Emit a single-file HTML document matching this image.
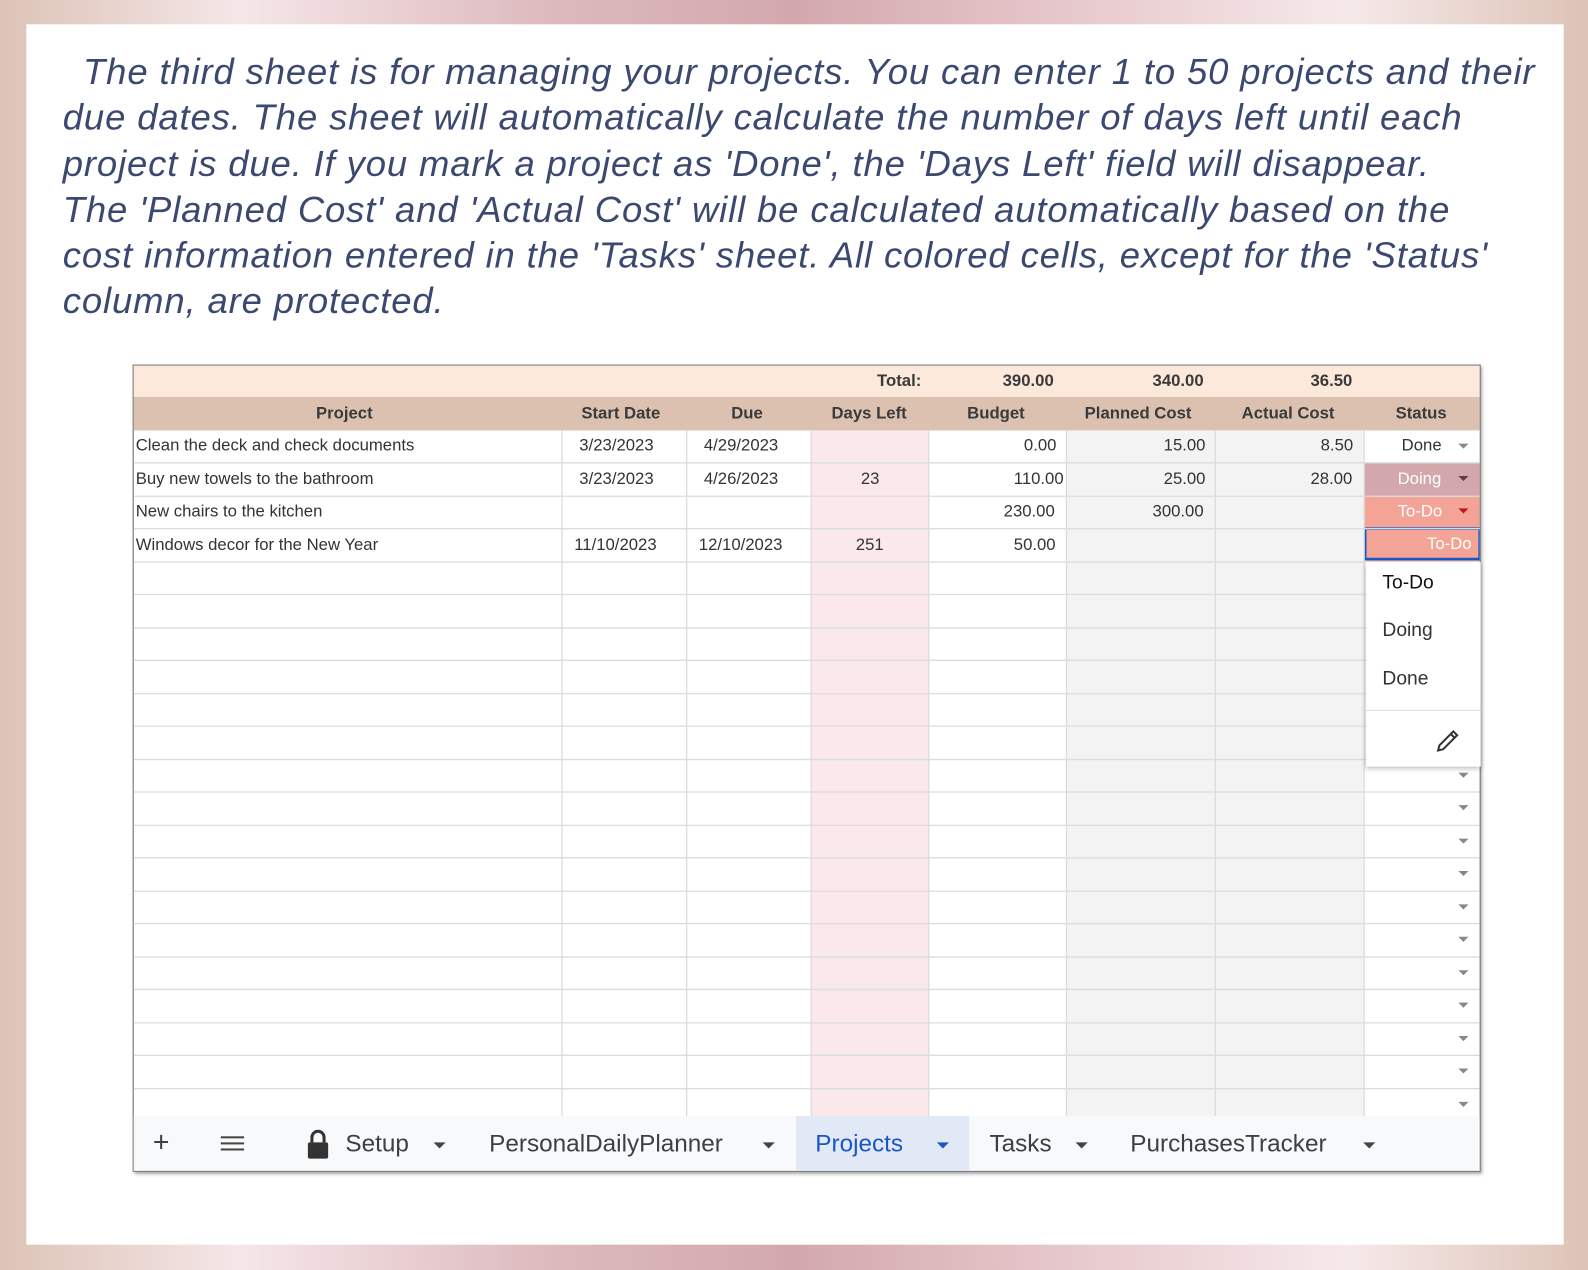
<!DOCTYPE html>
<html><head><meta charset="utf-8"><style>
html,body{margin:0;padding:0;width:1588px;height:1270px;overflow:hidden;background:#fff}
#w{position:absolute;left:0;top:0;width:1568px;height:1254px;transform:scale(1.01276);transform-origin:0 0;
background:linear-gradient(90deg,#dcc3b6 0%,#f5e6e8 15%,#dcb9bd 35%,#d2a8ad 50%,#e4c4c8 65%,#f6e9ea 85%,#dcc3b6 100%)}
#p{position:absolute;left:26px;top:24px;width:1518px;height:1205px;background:#fff}
.t{position:absolute;left:62px;font-family:"Liberation Sans",sans-serif;font-style:italic;font-size:36px;letter-spacing:0.85px;color:#3b4870;white-space:nowrap;line-height:45px}
.c{position:absolute;font-family:"Liberation Sans",sans-serif;font-size:16.5px;color:#333;white-space:nowrap}
.b{font-weight:bold;color:#3a3a3a}
.tab{position:absolute;top:1116px;font-family:"Liberation Sans",sans-serif;font-size:24px;color:#3c4043;white-space:nowrap}
.ar{position:absolute;width:0;height:0;border-left:6px solid transparent;border-right:6px solid transparent;border-top:6px solid #444}
.sa{position:absolute;left:1440px;width:0;height:0;border-left:5px solid transparent;border-right:5px solid transparent;border-top:5px solid #888}
</style></head><body><div id="w">
<div id="p"></div>
<div class="t" style="top:48px;left:82px">The third sheet is for managing your projects. You can enter 1 to 50 projects and their</div>
<div class="t" style="top:93px">due dates. The sheet will automatically calculate the number of days left until each</div>
<div class="t" style="top:139px">project is due. If you mark a project as 'Done', the 'Days Left' field will disappear.</div>
<div class="t" style="top:184px">The 'Planned Cost' and 'Actual Cost' will be calculated automatically based on the</div>
<div class="t" style="top:229px">cost information entered in the 'Tasks' sheet. All colored cells, except for the 'Status'</div>
<div class="t" style="top:274px">column, are protected.</div>

<div style="position:absolute;left:131px;top:360px;width:1331px;height:797px;border:1px solid #666;box-shadow:2px 2px 3px rgba(0,0,0,.35);background:#fff;overflow:hidden;box-sizing:border-box">
<svg width="1331" height="797" style="position:absolute;left:-1px;top:-1px">
<rect x="0" y="0" width="1331" height="32" fill="#fde8dc"/>
<rect x="0" y="32" width="1331" height="33" fill="#dcc1b1"/>
<rect x="670" y="65" width="116" height="680" fill="#fae8ea"/>
<rect x="922" y="65" width="294" height="680" fill="#f3f3f3"/>
<rect x="1216" y="65" width="115" height="32" fill="#fff"/>
<rect x="1216" y="97" width="115" height="33" fill="#d3a8ad"/>
<rect x="1216" y="130" width="115" height="32" fill="#f4a496"/>
<rect x="1216" y="162" width="115" height="32" fill="#f4a496"/>
<rect x="1217" y="162" width="113" height="30" fill="none" stroke="#1a56c4" stroke-width="2.5"/>
<g stroke="#dcdcdc" stroke-width="1.3">
<line x1="0" y1="97" x2="1331" y2="97"/><line x1="0" y1="130" x2="1331" y2="130"/><line x1="0" y1="162" x2="1331" y2="162"/><line x1="0" y1="195" x2="1331" y2="195"/><line x1="0" y1="227" x2="1331" y2="227"/><line x1="0" y1="260" x2="1331" y2="260"/><line x1="0" y1="292" x2="1331" y2="292"/><line x1="0" y1="325" x2="1331" y2="325"/><line x1="0" y1="357" x2="1331" y2="357"/><line x1="0" y1="390" x2="1331" y2="390"/><line x1="0" y1="422" x2="1331" y2="422"/><line x1="0" y1="455" x2="1331" y2="455"/><line x1="0" y1="487" x2="1331" y2="487"/><line x1="0" y1="520" x2="1331" y2="520"/><line x1="0" y1="552" x2="1331" y2="552"/><line x1="0" y1="585" x2="1331" y2="585"/><line x1="0" y1="617" x2="1331" y2="617"/><line x1="0" y1="650" x2="1331" y2="650"/><line x1="0" y1="682" x2="1331" y2="682"/><line x1="0" y1="715" x2="1331" y2="715"/>
<line x1="424" y1="65" x2="424" y2="745"/><line x1="547" y1="65" x2="547" y2="745"/><line x1="670" y1="65" x2="670" y2="745"/><line x1="786" y1="65" x2="786" y2="745"/><line x1="922" y1="65" x2="922" y2="745"/><line x1="1069" y1="65" x2="1069" y2="745"/><line x1="1216" y1="65" x2="1216" y2="745"/>
</g>
<rect x="0" y="742" width="1331" height="55" fill="#f8f9fa"/>
<rect x="655" y="742" width="171" height="55" fill="#e1e9f7"/>
</svg>
</div>

<div class="c b" style="left:866px;top:367px">Total:</div>
<div class="c b" style="left:990px;top:367px">390.00</div>
<div class="c b" style="left:1138px;top:367px">340.00</div>
<div class="c b" style="left:1294px;top:367px">36.50</div>
<div class="c b" style="left:312px;top:399px">Project</div>
<div class="c b" style="left:574px;top:399px">Start Date</div>
<div class="c b" style="left:722px;top:399px">Due</div>
<div class="c b" style="left:821px;top:399px">Days Left</div>
<div class="c b" style="left:955px;top:399px">Budget</div>
<div class="c b" style="left:1071px;top:399px">Planned Cost</div>
<div class="c b" style="left:1226px;top:399px">Actual Cost</div>
<div class="c b" style="left:1378px;top:399px">Status</div>

<div class="c" style="left:134px;top:431px">Clean the deck and check documents</div>
<div class="c" style="left:572px;top:431px">3/23/2023</div>
<div class="c" style="left:695px;top:431px">4/29/2023</div>
<div class="c" style="left:1011px;top:431px">0.00</div>
<div class="c" style="left:1149px;top:431px">15.00</div>
<div class="c" style="left:1304px;top:431px">8.50</div>
<div class="c" style="left:1384px;top:431px">Done</div>
<div class="sa" style="top:438px"></div>

<div class="c" style="left:134px;top:464px">Buy new towels to the bathroom</div>
<div class="c" style="left:572px;top:464px">3/23/2023</div>
<div class="c" style="left:695px;top:464px">4/26/2023</div>
<div class="c" style="left:850px;top:464px">23</div>
<div class="c" style="left:1001px;top:464px">110.00</div>
<div class="c" style="left:1149px;top:464px">25.00</div>
<div class="c" style="left:1294px;top:464px">28.00</div>
<div class="c" style="left:1380px;top:464px;color:#fff">Doing</div>
<div class="sa" style="top:470px;border-top-color:#6b3a45"></div>

<div class="c" style="left:134px;top:496px">New chairs to the kitchen</div>
<div class="c" style="left:991px;top:496px">230.00</div>
<div class="c" style="left:1138px;top:496px">300.00</div>
<div class="c" style="left:1380px;top:496px;color:#fff">To-Do</div>
<div class="sa" style="top:502px;border-top-color:#c0181c"></div>

<div class="c" style="left:134px;top:529px">Windows decor for the New Year</div>
<div class="c" style="left:567px;top:529px">11/10/2023</div>
<div class="c" style="left:690px;top:529px">12/10/2023</div>
<div class="c" style="left:845px;top:529px">251</div>
<div class="c" style="left:1001px;top:529px">50.00</div>
<div class="c" style="left:1409px;top:528px;color:#fff">To-Do</div>

<div class="sa" style="top:763px"></div><div class="sa" style="top:795px"></div><div class="sa" style="top:828px"></div><div class="sa" style="top:860px"></div><div class="sa" style="top:893px"></div><div class="sa" style="top:925px"></div><div class="sa" style="top:958px"></div><div class="sa" style="top:990px"></div><div class="sa" style="top:1023px"></div><div class="sa" style="top:1055px"></div><div class="sa" style="top:1088px"></div>

<div style="position:absolute;left:1349px;top:555px;width:113px;height:202px;background:#fff;box-shadow:0 2px 5px rgba(0,0,0,.3)">
<div style="position:absolute;left:0;right:0;top:146px;border-top:1px solid #ddd"></div>
<div class="c" style="left:16px;top:10px;font-size:19px;color:#111">To-Do</div>
<div class="c" style="left:16px;top:57px;font-size:19px">Doing</div>
<div class="c" style="left:16px;top:105px;font-size:19px">Done</div>
<svg width="30" height="30" style="position:absolute;left:66px;top:161px" viewBox="0 0 24 24"><path d="M4 20l1-4L16 5l3 3L8 19z M14 7l3 3" fill="none" stroke="#333" stroke-width="1.6"/></svg>
</div>

<div class="tab" style="left:151px;top:1112px;font-size:28px">+</div>
<div style="position:absolute;left:218px;top:1122px;width:23px;height:2px;background:#444;box-shadow:0 6px 0 #444,0 12px 0 #444"></div>
<svg width="22" height="30" style="position:absolute;left:303px;top:1115px" viewBox="0 0 22 30"><path d="M5 13V8a6 6 0 0 1 12 0v5" fill="none" stroke="#333" stroke-width="3"/><rect x="1" y="13" width="20" height="16" rx="2" fill="#333"/></svg>
<div class="tab" style="left:341px">Setup</div><div class="ar" style="left:428px;top:1128px"></div>
<div class="tab" style="left:483px">PersonalDailyPlanner</div><div class="ar" style="left:753px;top:1128px"></div>
<div class="tab" style="left:805px;color:#1a56c4">Projects</div><div class="ar" style="left:925px;top:1128px;border-top-color:#1a56c4"></div>
<div class="tab" style="left:977px">Tasks</div><div class="ar" style="left:1062px;top:1128px"></div>
<div class="tab" style="left:1116px">PurchasesTracker</div><div class="ar" style="left:1346px;top:1128px"></div>
</div></body></html>
